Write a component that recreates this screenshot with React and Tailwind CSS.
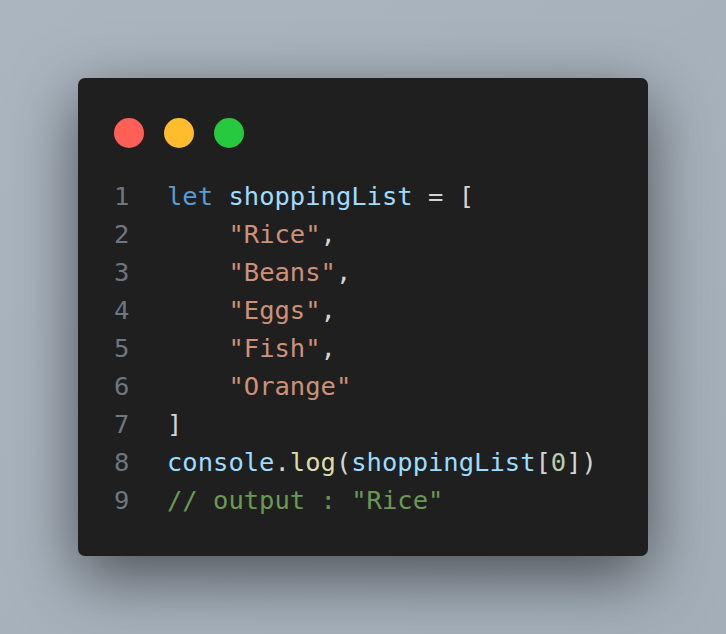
import React from "react";

const lines = [
  [["let", "text-[#569cd6]"], [" "], ["shoppingList", "text-[#9cdcfe]"], [" = ["]],
  [["    "], ['"Rice"', "text-[#ce9178]"], [","]],
  [["    "], ['"Beans"', "text-[#ce9178]"], [","]],
  [["    "], ['"Eggs"', "text-[#ce9178]"], [","]],
  [["    "], ['"Fish"', "text-[#ce9178]"], [","]],
  [["    "], ['"Orange"', "text-[#ce9178]"]],
  [["]"]],
  [
    ["console", "text-[#9cdcfe]"],
    ["."],
    ["log", "text-[#dcdcaa]"],
    ["("],
    ["shoppingList", "text-[#9cdcfe]"],
    ["["],
    ["0", "text-[#b5cea8]"],
    ["])"],
  ],
  [['// output : "Rice"', "text-[#6a9955]"]],
];

export default function App() {
  return (
    <div className="min-h-screen w-full flex items-center justify-center bg-gradient-to-br from-[#aab5bf] to-[#a3aeb8]">
      <div className="w-[570px] h-[478px] rounded-[7px] bg-[#1f1f1f] shadow-[0_20px_64px_rgba(0,0,0,0.55)] pl-[36px] pt-[40px] pb-[36px] font-['DejaVu_Sans_Mono',monospace]">
        <div className="flex gap-[20px]">
          <span className="w-[30px] h-[30px] rounded-full bg-[#ff5f56]" />
          <span className="w-[30px] h-[30px] rounded-full bg-[#ffbd2e]" />
          <span className="w-[30px] h-[30px] rounded-full bg-[#27c93f]" />
        </div>
        <div className="mt-[29px] text-[25.5px] leading-[38px] text-[#d4d4d4]">
          {lines.map((parts, i) => (
            <div key={i} className="flex">
              <span className="w-[53px] shrink-0 text-[#6e7681]">{i + 1}</span>
              <span className="whitespace-pre">
                {parts.map(([t, c], j) => (
                  <span key={j} className={c}>
                    {t}
                  </span>
                ))}
              </span>
            </div>
          ))}
        </div>
      </div>
    </div>
  );
}
